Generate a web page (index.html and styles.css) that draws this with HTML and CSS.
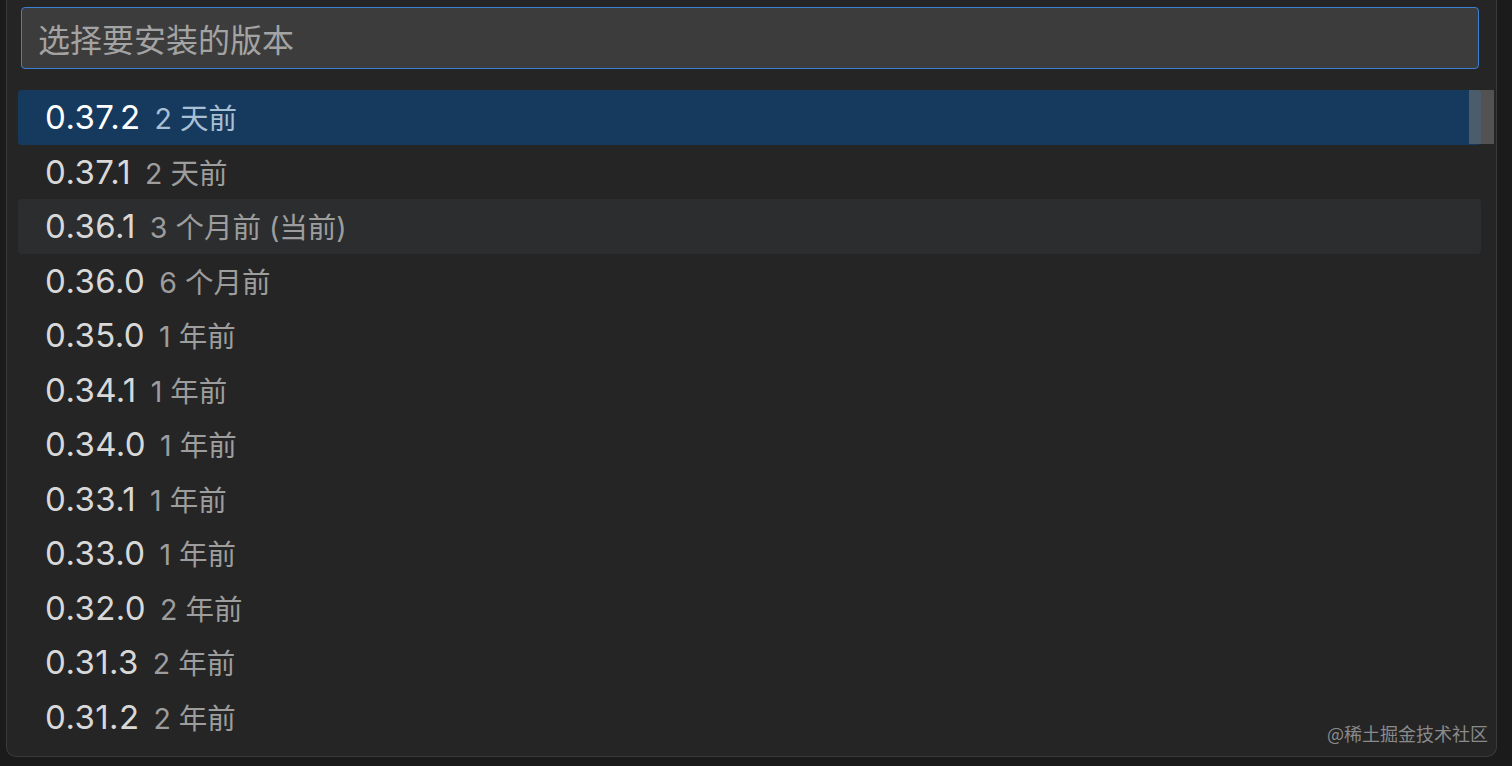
FILE: index.html
```html
<!DOCTYPE html>
<html lang="zh-CN">
<head>
<meta charset="utf-8">
<title>选择要安装的版本</title>
<link rel="stylesheet" href="styles.css">
</head>
<body>
<div class="panel">
  <div class="input"><span class="placeholder">选择要安装的版本</span></div>
  <div class="list">
    <div class="row selected"><span class="label">0.37.2</span><span class="desc">2 天前</span></div>
    <div class="row"><span class="label">0.37.1</span><span class="desc">2 天前</span></div>
    <div class="row hover"><span class="label">0.36.1</span><span class="desc">3 个月前 (当前)</span></div>
    <div class="row"><span class="label">0.36.0</span><span class="desc">6 个月前</span></div>
    <div class="row"><span class="label">0.35.0</span><span class="desc">1 年前</span></div>
    <div class="row"><span class="label">0.34.1</span><span class="desc">1 年前</span></div>
    <div class="row"><span class="label">0.34.0</span><span class="desc">1 年前</span></div>
    <div class="row"><span class="label">0.33.1</span><span class="desc">1 年前</span></div>
    <div class="row"><span class="label">0.33.0</span><span class="desc">1 年前</span></div>
    <div class="row"><span class="label">0.32.0</span><span class="desc">2 年前</span></div>
    <div class="row"><span class="label">0.31.3</span><span class="desc">2 年前</span></div>
    <div class="row"><span class="label">0.31.2</span><span class="desc">2 年前</span></div>
    <div class="thumb"></div>
  </div>
  <div class="watermark">@稀土掘金技术社区</div>
</div>
</body>
</html>
```
FILE: styles.css
```css
html, body {
  margin: 0;
  padding: 0;
  background: #1b1b1b;
  height: 766px;
  overflow: hidden;
  font-family: Inter, "Noto Sans CJK SC", sans-serif;
}

.panel {
  position: relative;
  box-sizing: border-box;
  margin-left: 6px;
  width: 1491px;
  height: 757px;
  background: #252526;
  border: 1px solid #3a3a3a;
  border-top: none;
  border-radius: 0 0 10px 10px;
  padding-top: 7px;
}

.input {
  box-sizing: border-box;
  height: 62px;
  margin: 0 17px 0 14px;
  background: #3c3c3c;
  border: 1px solid #3d80d2;
  border-radius: 4px;
  padding-left: 16px;
  display: flex;
  align-items: center;
}

.placeholder {
  font-family: "Noto Sans CJK SC", Inter, sans-serif;
  font-size: 32px;
  color: #a3a3a3;
}

.list {
  position: relative;
  margin-top: 21px;
  padding: 0 15px 0 11px;
}

.row {
  height: 54.5px;
  line-height: 54.5px;
  padding-left: 27px;
  border-radius: 4px;
  white-space: nowrap;
}

.label {
  font-family: Inter, "Noto Sans CJK SC", sans-serif;
  font-size: 33px;
  letter-spacing: 0.4px;
  color: #d8d8d8;
}

.desc {
  font-family: Inter, "Noto Sans CJK SC", sans-serif;
  font-size: 28.5px;
  color: #9d9d9d;
  margin-left: 14px;
}

.row.selected {
  background: #163a5e;
}

.row.selected .label {
  color: #ffffff;
}

.row.selected .desc {
  color: #a9bfd4;
}

.row.hover {
  background: #2b2d2f;
}

.thumb {
  position: absolute;
  top: 0;
  right: 2px;
  width: 25px;
  height: 54px;
  background: rgba(121, 121, 121, 0.55);
}

.watermark {
  position: absolute;
  right: 8px;
  bottom: 12px;
  font-family: "Noto Sans CJK SC", sans-serif;
  font-size: 18px;
  line-height: 22px;
  color: #8a8a8a;
}
```
